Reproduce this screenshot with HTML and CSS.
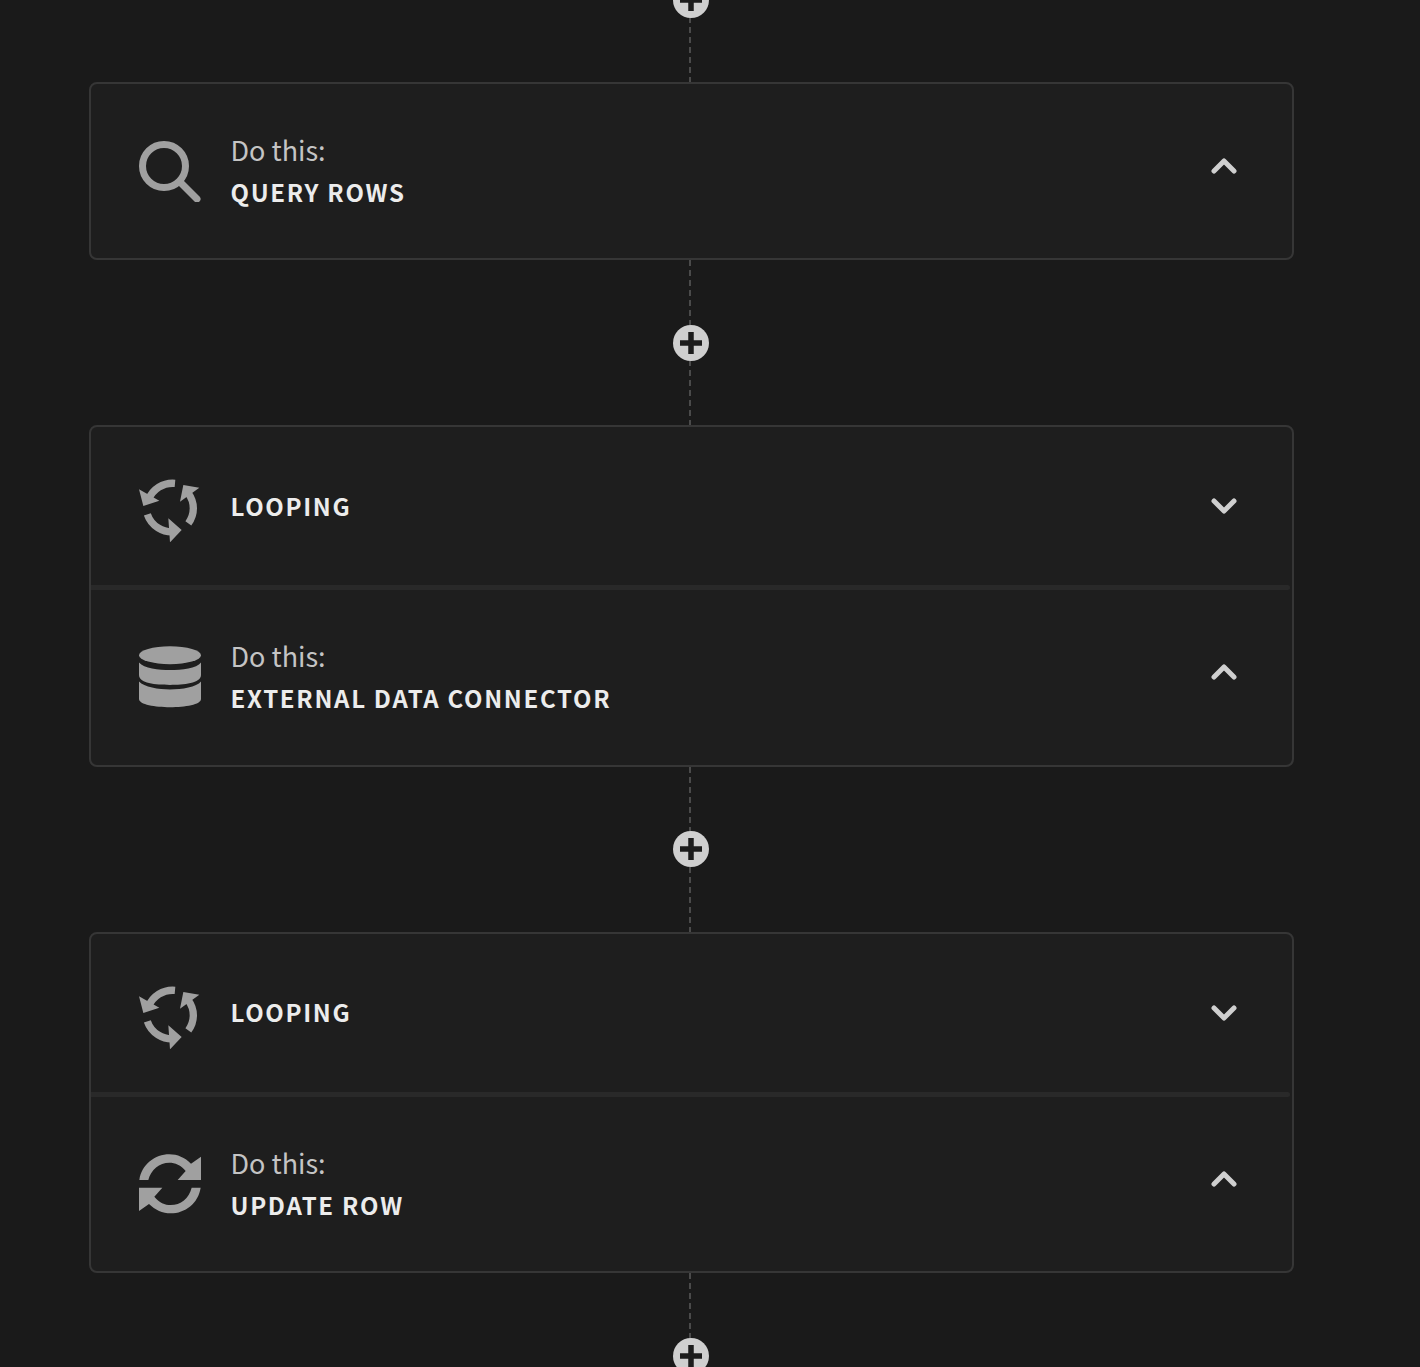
FILE: index.html
```html
<!DOCTYPE html>
<html>
  <head>
    <meta charset="UTF-8">
    <meta name="viewport" content="width=device-width, initial-scale=1.0">
    <title>Automation</title>
    <link rel="stylesheet" href="styles.css">
  </head>
  <body>
    <div class="flow">
      <div class="connector connectorFirst">
        <span class="add"><svg width="36" height="36" viewBox="0 0 36 36"><circle cx="18" cy="18" r="18" fill="#cfcfcf"/><path d="M18 7v22M7 18h22" stroke="#1c1c1c" stroke-width="5.5"/></svg></span>
      </div>

      <div class="card">
        <div class="row rowAction">
          <svg class="icon" width="62" height="62" viewBox="0 0 62 62"><circle cx="25" cy="26" r="21.5" fill="none" stroke="#a0a0a0" stroke-width="7"/><path d="M41 42l17 17" stroke="#a0a0a0" stroke-width="7" stroke-linecap="round"/></svg>
          <div class="text">
            <div class="label">Do this:</div>
            <div class="title">QUERY ROWS</div>
          </div>
          <svg class="chevron chevronUp" width="26" height="16" viewBox="0 0 26 16"><path d="M3 13l10-10 10 10" fill="none" stroke="#cfcfcf" stroke-width="5" stroke-linecap="round" stroke-linejoin="round"/></svg>
        </div>
      </div>

      <div class="connector">
        <span class="add"><svg width="36" height="36" viewBox="0 0 36 36"><circle cx="18" cy="18" r="18" fill="#cfcfcf"/><path d="M18 7v22M7 18h22" stroke="#1c1c1c" stroke-width="5.5"/></svg></span>
      </div>

      <div class="card">
        <div class="row rowLoop">
          <svg class="icon" width="62" height="72" viewBox="57 15 186 216"><path d="M165 55A78 78 0 0 0 85 105M205 175A75 75 0 0 0 205 85M82 148A78 78 0 0 0 165 200" fill="none" stroke="#a0a0a0" stroke-width="22"/><path d="M57 73L70 123 118 107ZM190 60L238 68 180 110ZM145 160L185 195 150 232Z" fill="#a0a0a0"/></svg>
          <div class="text">
            <div class="title">LOOPING</div>
          </div>
          <svg class="chevron" width="26" height="16" viewBox="0 0 26 16"><path d="M3 3l10 10 10-10" fill="none" stroke="#cfcfcf" stroke-width="5" stroke-linecap="round" stroke-linejoin="round"/></svg>
        </div>
        <div class="divider"></div>
        <div class="row rowAction">
          <svg class="icon" width="62" height="62" viewBox="55 48 188 186"><ellipse cx="149" cy="75" rx="94" ry="27" fill="#a0a0a0"/><path d="M55 97C70 115 115 120 149 120 185 120 230 115 243 97V135C243 160 190 165 149 165 105 165 55 160 55 135ZM55 155C70 172 115 179 149 179 185 179 230 172 243 155V208C243 225 195 233 149 233 105 233 55 225 55 208Z" fill="#a0a0a0"/></svg>
          <div class="text">
            <div class="label">Do this:</div>
            <div class="title">EXTERNAL DATA CONNECTOR</div>
          </div>
          <svg class="chevron chevronUp" width="26" height="16" viewBox="0 0 26 16"><path d="M3 13l10-10 10 10" fill="none" stroke="#cfcfcf" stroke-width="5" stroke-linecap="round" stroke-linejoin="round"/></svg>
        </div>
      </div>

      <div class="connector">
        <span class="add"><svg width="36" height="36" viewBox="0 0 36 36"><circle cx="18" cy="18" r="18" fill="#cfcfcf"/><path d="M18 7v22M7 18h22" stroke="#1c1c1c" stroke-width="5.5"/></svg></span>
      </div>

      <div class="card">
        <div class="row rowLoop">
          <svg class="icon" width="62" height="72" viewBox="57 15 186 216"><path d="M165 55A78 78 0 0 0 85 105M205 175A75 75 0 0 0 205 85M82 148A78 78 0 0 0 165 200" fill="none" stroke="#a0a0a0" stroke-width="22"/><path d="M57 73L70 123 118 107ZM190 60L238 68 180 110ZM145 160L185 195 150 232Z" fill="#a0a0a0"/></svg>
          <div class="text">
            <div class="title">LOOPING</div>
          </div>
          <svg class="chevron" width="26" height="16" viewBox="0 0 26 16"><path d="M3 3l10 10 10-10" fill="none" stroke="#cfcfcf" stroke-width="5" stroke-linecap="round" stroke-linejoin="round"/></svg>
        </div>
        <div class="divider"></div>
        <div class="row rowAction">
          <svg class="icon" width="62" height="60" viewBox="57 39 186 180"><path d="M58 117C65 70 105 40 148 40 172 40 195 50 213 68L243 47V117H173L197 90C183 72 165 65 148 65 118 65 93 85 85 117ZM242 140C235 187 195 217 152 217 128 217 105 207 87 189L57 210V140H127L103 167C117 185 135 192 152 192 182 192 207 172 215 140Z" fill="#a0a0a0"/></svg>
          <div class="text">
            <div class="label">Do this:</div>
            <div class="title">UPDATE ROW</div>
          </div>
          <svg class="chevron chevronUp" width="26" height="16" viewBox="0 0 26 16"><path d="M3 13l10-10 10 10" fill="none" stroke="#cfcfcf" stroke-width="5" stroke-linecap="round" stroke-linejoin="round"/></svg>
        </div>
      </div>

      <div class="connector">
        <span class="add"><svg width="36" height="36" viewBox="0 0 36 36"><circle cx="18" cy="18" r="18" fill="#cfcfcf"/><path d="M18 7v22M7 18h22" stroke="#1c1c1c" stroke-width="5.5"/></svg></span>
      </div>
    </div>
  </body>
</html>
```

FILE: styles.css
```css
* {
  margin: 0;
  padding: 0;
  box-sizing: border-box;
}

html,
body {
  height: 100%;
  overflow: hidden;
}

body {
  background-color: #1a1a1a;
  font-family: "Noto Sans CJK SC", "Noto Sans", sans-serif;
}

.flow {
  width: 1205px;
  margin-left: 89px;
}

.connector {
  display: flex;
  align-items: center;
  justify-content: center;
  height: 165px;
  background-image: repeating-linear-gradient(to bottom, #4a4a4a 0, #4a4a4a 6px, transparent 6px, transparent 10px);
  background-size: 2px 100%;
  background-position: 600px 0;
  background-repeat: no-repeat;
}
.connectorFirst {
  margin-top: -83px;
}

.add {
  display: flex;
  margin-left: -1px;
}

.card {
  border: 2px solid #363636;
  border-radius: 8px;
  background-color: #1e1e1e;
}

.row {
  display: flex;
  align-items: center;
  gap: 29.5px;
  padding: 0 55px 0 48px;
}
.rowLoop {
  height: 158px;
}
.rowAction {
  height: 174px;
}
.card .divider + .rowAction {
  height: 174.5px;
}

.divider {
  height: 5px;
  margin-right: 2px;
  border-radius: 0 3px 3px 0;
  background-color: #292929;
}

.icon {
  flex: none;
}

.text {
  flex: 1;
  padding-bottom: 1px;
}

.label {
  font-size: 27px;
  line-height: 43px;
  color: #c4c4c4;
}

.title {
  font-size: 24px;
  line-height: 42px;
  font-weight: 700;
  letter-spacing: 1.7px;
  color: #ececec;
}

.chevron {
  flex: none;
}
.chevronUp {
  margin-bottom: 10px;
}
```
